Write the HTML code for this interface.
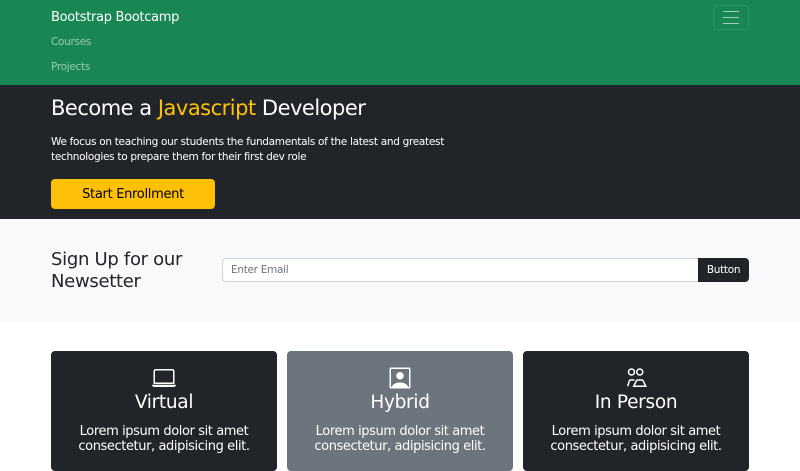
<!DOCTYPE html>
<html><head><style>
*{box-sizing:border-box;margin:0;padding:0}
body{width:800px;height:450px;overflow:hidden;font-family:"DejaVu Sans","Liberation Sans",sans-serif;background:#fff;position:relative;letter-spacing:-0.3px}
.a{position:absolute}
nav{position:absolute;left:0;top:0;width:800px;height:85px;background:#198754}
.hero{position:absolute;left:0;top:85px;width:800px;height:134px;background:#212529}
.news{position:absolute;left:0;top:219px;width:800px;height:102px;background:#f8f9fa}
.card{position:absolute;top:351px;width:226px;height:120px;border-radius:4px;background:#212529;color:#fff;text-align:center}
.card .t{position:absolute;left:0;right:0;top:41px;font-size:18.5px}
.card .p{position:absolute;left:0;right:0;top:73px;font-size:13px;line-height:15px;letter-spacing:-0.4px}
.card svg{position:absolute;left:101px;top:15px}
</style></head><body>
<nav>
<div class="a" style="left:51px;top:10px;font-size:13px;color:#fff">Bootstrap Bootcamp</div>
<div class="a" style="left:51px;top:36px;font-size:10.5px;color:rgba(255,255,255,.55)">Courses</div>
<div class="a" style="left:51px;top:61px;font-size:10.5px;color:rgba(255,255,255,.55)">Projects</div>
<div class="a" style="left:713px;top:5px;width:36px;height:25px;border:1px solid rgba(255,255,255,.1);border-radius:4px"></div>
<div class="a" style="left:723px;top:11px;width:16px;height:1px;background:rgba(255,255,255,.6);box-shadow:0 6px 0 rgba(255,255,255,.6),0 12px 0 rgba(255,255,255,.6)"></div>
</nav>
<div class="hero">
<div class="a" style="left:51px;top:11px;font-size:21px;color:#fff;white-space:nowrap;letter-spacing:-0.5px">Become a <span style="color:#ffc107">Javascript</span> Developer</div>
<div class="a" style="left:51px;top:50px;font-size:10.5px;line-height:15px;color:#fff;width:420px">We focus on teaching our students the fundamentals of the latest and greatest technologies to prepare them for their first dev role</div>
<div class="a" style="left:51px;top:94px;width:164px;height:30px;background:#ffc107;border-radius:4px;font-size:13px;color:#000;text-align:center;line-height:31px">Start Enrollment</div>
</div>
<div class="news">
<div class="a" style="left:51px;top:30px;font-size:18px;line-height:22px;color:#212529">Sign Up for our<br>Newsetter</div>
<div class="a" style="left:222px;top:39px;width:477px;height:24px;background:#fff;border:1px solid #ced4da;border-radius:4px 0 0 4px;font-size:10.5px;color:#6c757d;line-height:22px;padding-left:8px">Enter Email</div>
<div class="a" style="left:698px;top:39px;width:51px;height:24px;background:#212529;border-radius:0 4px 4px 0;font-size:10.5px;color:#fff;line-height:24px;text-align:center">Button</div>
</div>
<div class="card" style="left:51px">
<svg width="24" height="24" viewBox="0 0 16 16" fill="#fff"><path d="M13.5 3a.5.5 0 0 1 .5.5V11H2V3.5a.5.5 0 0 1 .5-.5h11zm-11-1A1.5 1.5 0 0 0 1 3.5V12h14V3.5A1.5 1.5 0 0 0 13.5 2h-11zM0 12.5h16a1.5 1.5 0 0 1-1.5 1.5h-13A1.5 1.5 0 0 1 0 12.5z"/></svg>
<div class="t">Virtual</div><div class="p">Lorem ipsum dolor sit amet<br>consectetur, adipisicing elit.</div></div>
<div class="card" style="left:287px;background:#6c757d">
<svg width="24" height="24" viewBox="0 0 16 16" fill="#fff"><path d="M2 1h12a1 1 0 0 1 1 1v12a1 1 0 0 1-1 1H2a1 1 0 0 1-1-1V2a1 1 0 0 1 1-1zm0 1v12h.5c.8-2 2.8-3 5.5-3s4.7 1 5.5 3h.5V2H2zm6 2a2.5 2.5 0 1 1 0 5 2.5 2.5 0 0 1 0-5z"/></svg>
<div class="t">Hybrid</div><div class="p">Lorem ipsum dolor sit amet<br>consectetur, adipisicing elit.</div></div>
<div class="card" style="left:523px">
<svg width="24" height="24" viewBox="0 0 16 16" fill="none" stroke="#fff" stroke-width="1"><circle cx="5" cy="4" r="2"/><circle cx="10.5" cy="4" r="2"/><path d="M2.5 13.5l1-3.5a1 1 0 0 1 1-.7h2.5M6.5 13.5l1.8-3.7a1 1 0 0 1 .9-.5h2.6a1 1 0 0 1 .9.5l1.8 3.7z"/></svg>
<div class="t">In Person</div><div class="p">Lorem ipsum dolor sit amet<br>consectetur, adipisicing elit.</div></div>
</body></html>
